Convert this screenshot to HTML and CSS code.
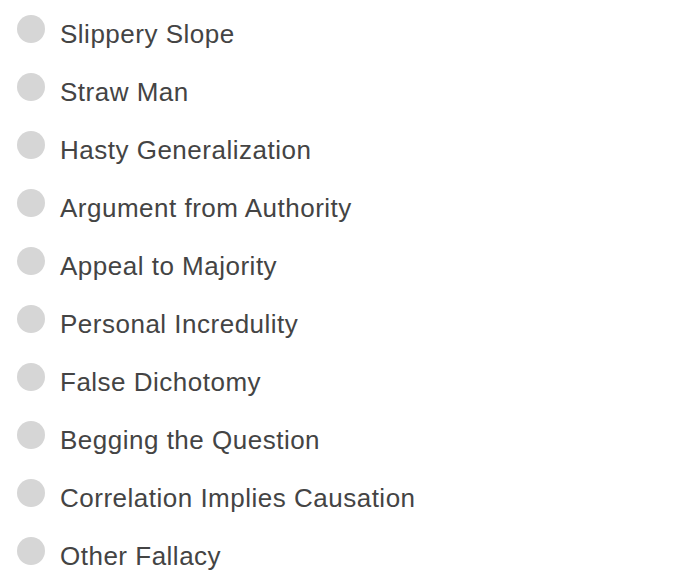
FILE: index.html
```html
<!DOCTYPE html>
<html>
<head>
<meta charset="utf-8">
<link rel="stylesheet" href="styles.css">
</head>
<body>
<ul class="options">
  <li class="option"><span class="radio"></span><span class="label">Slippery Slope</span></li>
  <li class="option"><span class="radio"></span><span class="label">Straw Man</span></li>
  <li class="option"><span class="radio"></span><span class="label">Hasty Generalization</span></li>
  <li class="option"><span class="radio"></span><span class="label">Argument from Authority</span></li>
  <li class="option"><span class="radio"></span><span class="label">Appeal to Majority</span></li>
  <li class="option"><span class="radio"></span><span class="label">Personal Incredulity</span></li>
  <li class="option"><span class="radio"></span><span class="label">False Dichotomy</span></li>
  <li class="option"><span class="radio"></span><span class="label">Begging the Question</span></li>
  <li class="option"><span class="radio"></span><span class="label">Correlation Implies Causation</span></li>
  <li class="option"><span class="radio"></span><span class="label">Other Fallacy</span></li>
</ul>
</body>
</html>
```
FILE: styles.css
```css
html, body {
  margin: 0;
  padding: 0;
  background: #ffffff;
}
body {
  font-family: "Liberation Sans", Arial, sans-serif;
  color: #444444;
}
.options {
  list-style: none;
  margin: 0;
  padding: 4px 0 0 17px;
}
.option {
  display: flex;
  align-items: flex-start;
  height: 58px;
}
.radio {
  flex: none;
  width: 28px;
  height: 28px;
  margin-top: 11px;
  border-radius: 50%;
  background: #d6d6d6;
}
.label {
  margin-left: 15px;
  margin-top: 15px;
  font-size: 26px;
  line-height: 30px;
  letter-spacing: 0.5px;
}
```
